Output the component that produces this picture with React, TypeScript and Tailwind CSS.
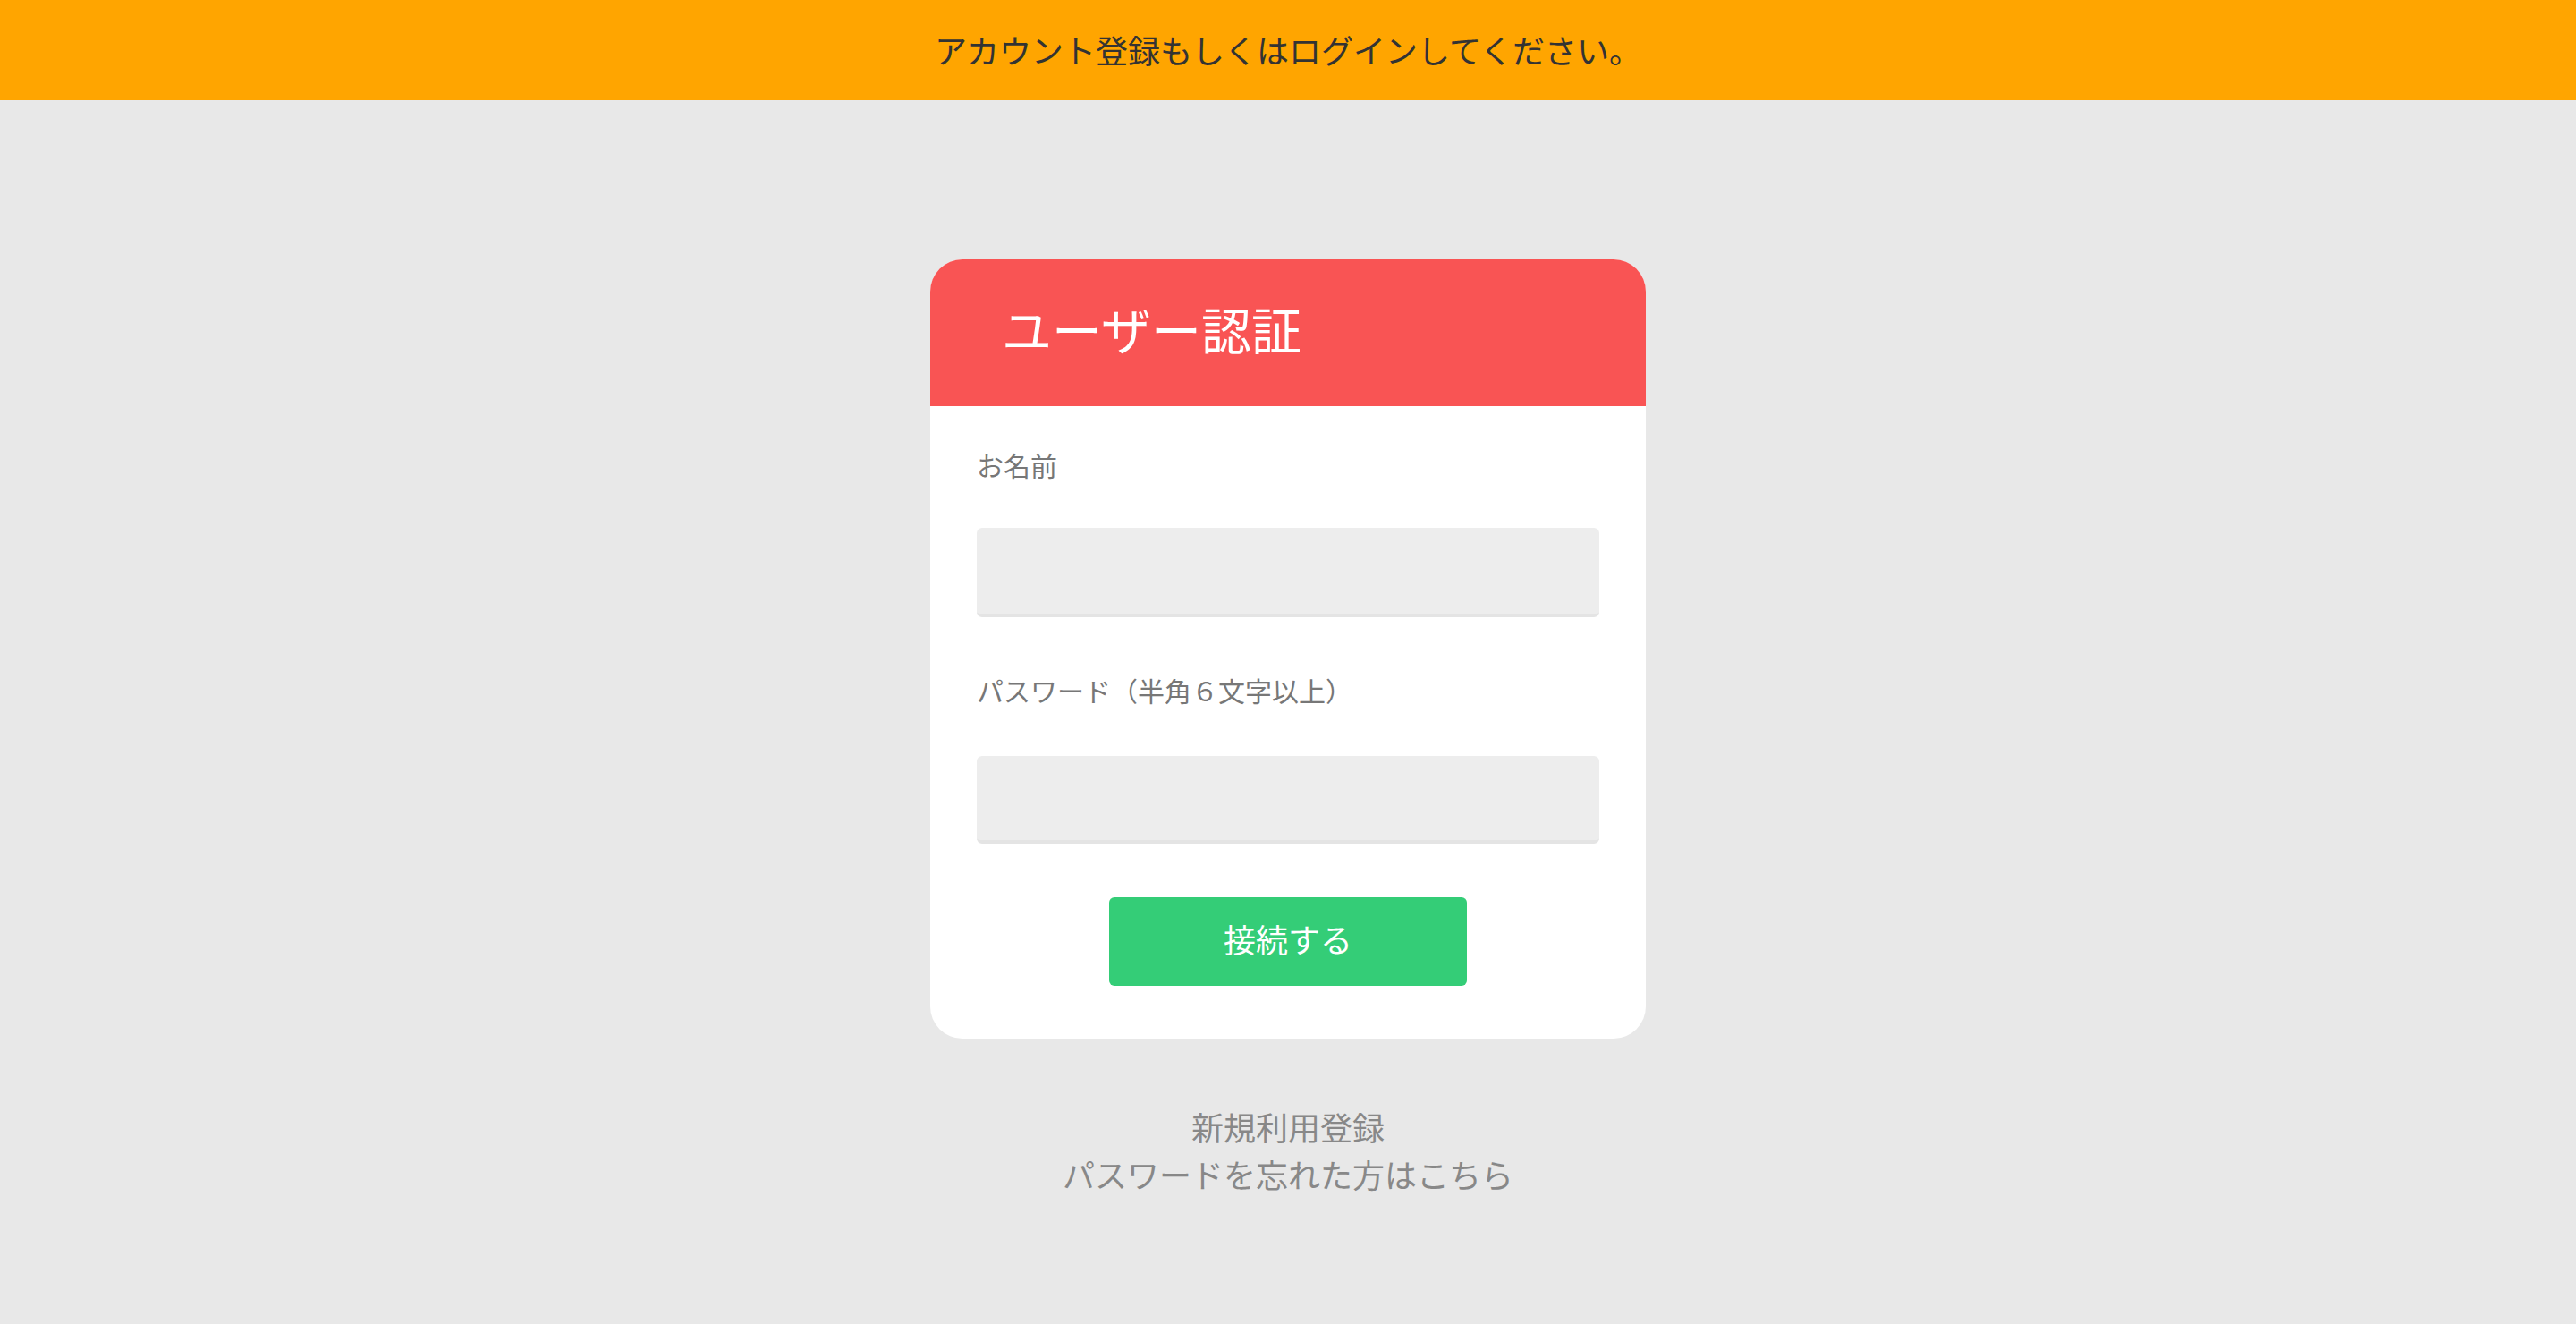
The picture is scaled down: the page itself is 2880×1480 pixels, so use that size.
import React from "react";

export default function App() {
  return (
    <div
      className="min-h-screen w-full bg-[#e8e8e8]"
      style={{ fontFamily: '"Noto Sans CJK JP", "Noto Sans", sans-serif' }}
    >
      <div className="flex h-[112px] w-full items-center justify-center bg-[#ffa500] pb-[2px] text-[36px] text-[#333333]">
        アカウント登録もしくはログインしてください。
      </div>

      <div className="mx-auto mt-[178px] w-[800px] overflow-hidden rounded-[36px] bg-white">
        <div className="flex h-[164px] items-center bg-[#f95454] px-[80px] pb-[10px] text-[56px] text-white">
          ユーザー認証
        </div>
        <div className="flex flex-col px-[52px] pb-[59px] pt-[43px]">
          <label className="text-[30px] leading-[45px] text-[#777777]">お名前</label>
          <input
            type="text"
            className="mt-[48px] h-[100px] w-full rounded-[6px] border-b-[4px] border-[#e4e4e4] bg-[#ededed] outline-none"
          />
          <label className="mt-[59px] text-[30px] leading-[45px] text-[#777777]">
            パスワード（半角６文字以上）
          </label>
          <input
            type="password"
            className="mt-[51px] h-[98px] w-full rounded-[6px] border-b-[4px] border-[#e4e4e4] bg-[#ededed] outline-none"
          />
          <button className="mx-auto mt-[60px] flex h-[99px] w-[400px] items-center justify-center rounded-[6px] bg-[#34cd77] pb-[8px] text-[36px] text-white">
            接続する
          </button>
        </div>
      </div>

      <div className="mt-[72px] flex flex-col items-center text-[36px] leading-[53px] text-[#888888]">
        <a>新規利用登録</a>
        <a>パスワードを忘れた方はこちら</a>
      </div>
    </div>
  );
}
